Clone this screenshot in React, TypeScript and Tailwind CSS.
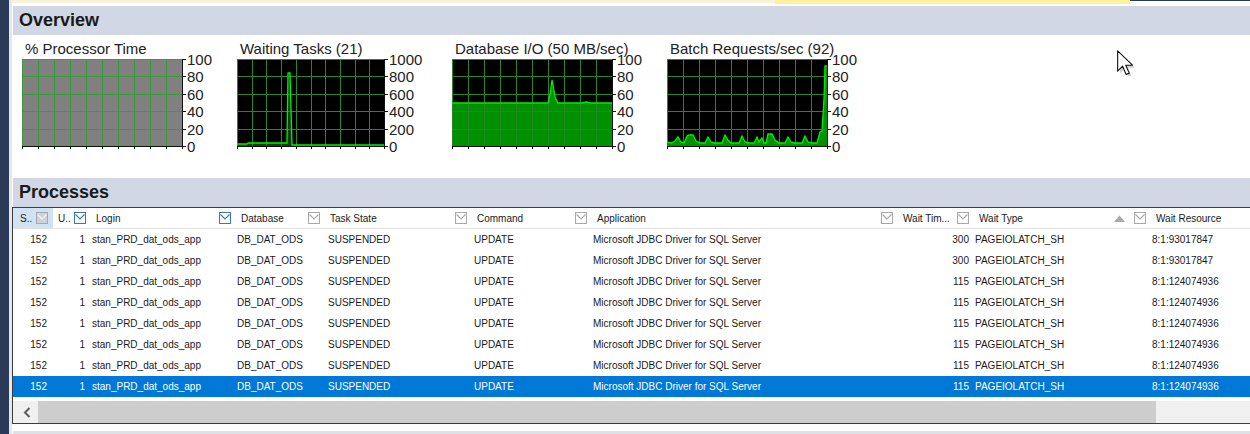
import React from "react";

const CHART_H = 87;

interface ChartProps {
  w: number;
  bg: string;
  points?: string;
  filled?: boolean;
}

// Perfmon-style chart: grid, optional area and line, axis with ticks
function Chart({ w, bg, points, filled }: ChartProps) {
  const h = CHART_H;
  const xs = Array.from({ length: 11 }, (_, i) => Math.round((i * w) / 10) + 0.5);
  const ys = Array.from({ length: 6 }, (_, i) => Math.round((i * h) / 5) + 0.5);
  const grid = bg === "#808080" ? "#3a9a3a" : "#2a862a";
  return (
    <svg width={w + 5} height={h + 4} className="block shrink-0">
      <rect x={0} y={0} width={w} height={h} fill={bg} />
      {points && (
        <polygon
          points={`0,${h} ${points} ${w},${h}`}
          fill={filled ? "#009000" : "#0b3f0b"}
        />
      )}
      <g shapeRendering="crispEdges" stroke={grid} strokeWidth={1}>
        {xs.map((x) => (
          <line key={`x${x}`} x1={x} y1={0} x2={x} y2={h} />
        ))}
        {ys.map((y) => (
          <line key={`y${y}`} x1={0} y1={y} x2={w} y2={y} />
        ))}
      </g>
      {points && (
        <polyline points={points} fill="none" stroke="#00ee00" strokeWidth={1.3} />
      )}
      <g shapeRendering="crispEdges" stroke="#111" strokeWidth={1}>
        <line x1={w + 0.5} y1={0} x2={w + 0.5} y2={h + 1} />
        <line x1={0} y1={h + 0.5} x2={w + 1} y2={h + 0.5} />
        {ys.map((y) => (
          <line key={`t${y}`} x1={w} y1={y} x2={w + 4} y2={y} />
        ))}
        {xs.map((x) => (
          <line key={`b${x}`} x1={x} y1={h} x2={x} y2={h + 3} />
        ))}
      </g>
    </svg>
  );
}

const charts = [
  {
    title: "% Processor Time",
    w: 160,
    bg: "#808080",
    labels: ["100", "80", "60", "40", "20", "0"],
  },
  {
    title: "Waiting Tasks (21)",
    w: 147,
    bg: "#000",
    labels: ["1000", "800", "600", "400", "200", "0"],
    points: "0,85 10,85 11,84 50,84 51,14 53,14 55,86 147,86",
  },
  {
    title: "Database I/O (50 MB/sec)",
    w: 160,
    bg: "#000",
    labels: ["100", "80", "60", "40", "20", "0"],
    points: "0,44 96,44 98,36 100,21 101,26 103,38 106,44 130,44 134,43 138,44 160,44",
    filled: true,
  },
  {
    title: "Batch Requests/sec (92)",
    w: 160,
    bg: "#000",
    labels: ["100", "80", "60", "40", "20", "0"],
    points:
      "0,83 4,84 8,82 11,78 14,83 17,84 20,77 22,76 26,76 29,82 33,84 38,84 41,78 44,83 48,84 55,84 58,76 61,81 64,84 72,84 75,77 78,83 82,84 87,84 90,78 92,83 95,79 97,84 99,84 101,75 105,75 108,81 112,84 118,84 121,78 124,83 128,84 135,84 138,77 141,83 145,84 150,84 153,73 155,72 157,40 158,7 160,7",
    filled: true,
  },
];

type Col = {
  key: string;
  head: string;
  w: string;
  right?: boolean;
  active?: boolean;
  sort?: boolean;
  hl?: boolean;
  cellPad: string;
  headPad: string;
};

const cols: Col[] = [
  { key: "s", head: "S..", w: "w-[40px]", right: true, hl: true, cellPad: "pr-[6px]", headPad: "pl-[7px]" },
  { key: "u", head: "U..", w: "w-[38px]", right: true, active: true, cellPad: "pr-[6px]", headPad: "pl-[5px]" },
  { key: "login", head: "Login", w: "w-[145px]", active: true, cellPad: "pl-[1px]", headPad: "pl-[5px]" },
  { key: "db", head: "Database", w: "w-[89px]", cellPad: "pl-[1px]", headPad: "pl-[5px]" },
  { key: "state", head: "Task State", w: "w-[147px]", cellPad: "pl-[3px]", headPad: "pl-[5px]" },
  { key: "cmd", head: "Command", w: "w-[120px]", cellPad: "pl-[2px]", headPad: "pl-[5px]" },
  { key: "app", head: "Application", w: "w-[306px]", cellPad: "pl-[1px]", headPad: "pl-[5px]" },
  { key: "wt", head: "Wait Tim...", w: "w-[76px]", right: true, cellPad: "pr-[5px]", headPad: "pl-[5px]" },
  { key: "wtype", head: "Wait Type", w: "w-[177px]", sort: true, cellPad: "pl-[1px]", headPad: "pl-[5px]" },
  { key: "res", head: "Wait Resource", w: "flex-1", cellPad: "pl-[1px]", headPad: "pl-[5px]" },
];

const rows = [
  ["300", "8:1:93017847"],
  ["300", "8:1:93017847"],
  ["115", "8:1:124074936"],
  ["115", "8:1:124074936"],
  ["115", "8:1:124074936"],
  ["115", "8:1:124074936"],
  ["115", "8:1:124074936"],
  ["115", "8:1:124074936"],
].map(([wt, res]) => ({
  s: "152",
  u: "1",
  login: "stan_PRD_dat_ods_app",
  db: "DB_DAT_ODS",
  state: "SUSPENDED",
  cmd: "UPDATE",
  app: "Microsoft JDBC Driver for SQL Server",
  wt,
  wtype: "PAGEIOLATCH_SH",
  res,
})) as Record<string, string>[];

function FilterIcon({ active, hl }: { active?: boolean; hl?: boolean }) {
  const stroke = active ? "#3a78b0" : "#a8a8a8";
  return (
    <svg width={12} height={12} className="block shrink-0">
      <rect
        x={0.5}
        y={0.5}
        width={11}
        height={11}
        fill={hl ? "#cfd3d8" : "#fff"}
        stroke={stroke}
        shapeRendering="crispEdges"
      />
      <polyline points="1.5,2.5 6,7 10.5,2.5" fill="none" stroke={hl ? "#f4f4f4" : stroke} strokeWidth={1.1} />
    </svg>
  );
}

function Cursor() {
  return (
    <svg width={22} height={30} viewBox="0 0 20 27" className="absolute left-[1116px] top-[49px]">
      <path d="M2.5,2.5 L2.5,21 L7,16.5 L10.2,24 L13,22.8 L9.9,15.6 L16,15.6 Z" fill="#000" opacity={0.18} transform="translate(1.2,1.2)" />
      <path d="M1.5,1.5 L1.5,20 L6,15.5 L9.2,23 L12,21.8 L8.9,14.6 L15,14.6 Z" fill="#fff" stroke="#111" strokeWidth={1} strokeLinejoin="round" />
    </svg>
  );
}

export default function App() {
  return (
    <div className="relative flex h-[434px] w-[1250px] overflow-hidden bg-white font-['Liberation_Sans',Arial,sans-serif] text-[#1a1a1a]">
      <div className="w-[9px] shrink-0 bg-[#2b3a57]" />
      <div className="w-[3px] shrink-0 bg-[#e3e7ef]" />
      <div className="flex min-w-0 flex-1 flex-col">
        {/* top strip */}
        <div className="flex h-[6px] shrink-0">
          <div className="h-[3px] w-[763px] bg-[#f8f1d6]" />
          <div className="h-[4px] w-[355px] bg-[#fff29e]" />
          <div className="h-px flex-1 bg-[#2b3a57]" />
        </div>

        {/* Overview */}
        <div className="ml-px flex h-[29px] shrink-0 items-center bg-[#d1d7e4] pl-[6px] text-[18px] font-bold">
          Overview
        </div>
        <div className="flex h-[143px] shrink-0 pl-[10px] pt-[5px]">
          {charts.map((c) => (
            <div key={c.title} className="flex w-[215px] shrink-0 flex-col">
              <div className="h-[17px] whitespace-nowrap pl-[3px] text-[15px] leading-[17px] text-[#222]">
                {c.title}
              </div>
              <div className="relative mt-[2px] flex">
                <Chart w={c.w} bg={c.bg} points={c.points} filled={c.filled} />
                <div className="-mt-[8px] flex h-[104px] flex-col justify-between text-[15px] leading-[17px] text-[#222]">
                  {c.labels.map((l) => (
                    <span key={l}>{l}</span>
                  ))}
                </div>
              </div>
            </div>
          ))}
        </div>

        {/* Processes */}
        <div className="ml-px flex h-[29px] shrink-0 items-center bg-[#d1d7e4] pl-[6px] text-[18px] font-bold">
          Processes
        </div>
        <div className="flex shrink-0 flex-col border-b border-l border-t border-[#3c3c3c] text-[10px]">
          <div className="flex h-[21px] border-b border-[#e2e2e2]">
            {cols.map((c) => (
              <div
                key={c.key}
                className={`flex ${c.w} shrink-0 items-center justify-between pr-[5px] ${c.headPad} ${
                  c.hl ? "bg-[#cfe3f5]" : ""
                }`}
              >
                <span className="whitespace-nowrap">{c.head}</span>
                {c.key !== "res" && (
                  <div className="flex items-center gap-[9px]">
                    {c.sort && (
                      <svg width={11} height={7} className="block">
                        <polygon points="0,7 5.5,0.5 11,7" fill="#a9a9a9" />
                      </svg>
                    )}
                    <FilterIcon active={c.active} hl={c.hl} />
                  </div>
                )}
              </div>
            ))}
          </div>
          {rows.map((r, i) => (
            <div
              key={i}
              className={`flex h-[21px] items-center ${i === rows.length - 1 ? "bg-[#0078d7] text-white" : ""}`}
            >
              {cols.map((c) => (
                <div
                  key={c.key}
                  className={`${c.w} shrink-0 overflow-hidden whitespace-nowrap ${c.cellPad} ${
                    c.right ? "text-right" : ""
                  }`}
                >
                  {r[c.key]}
                </div>
              ))}
            </div>
          ))}
          <div className="h-[4px]" />
          <div className="flex h-[22px] bg-[#f0f0f0]">
            <div className="flex w-[25px] items-center justify-center">
              <svg width={8} height={11} className="ml-[2px] block">
                <polyline points="6.5,1 2,5.5 6.5,10" fill="none" stroke="#5f5f5f" strokeWidth={2} />
              </svg>
            </div>
            <div className="w-[1118px] bg-[#cdcdcd]" />
          </div>
        </div>
        <div className="h-[7px] shrink-0" />
        <div className="ml-px flex-1 bg-[#dde1ea]" />
      </div>
      <Cursor />
    </div>
  );
}
